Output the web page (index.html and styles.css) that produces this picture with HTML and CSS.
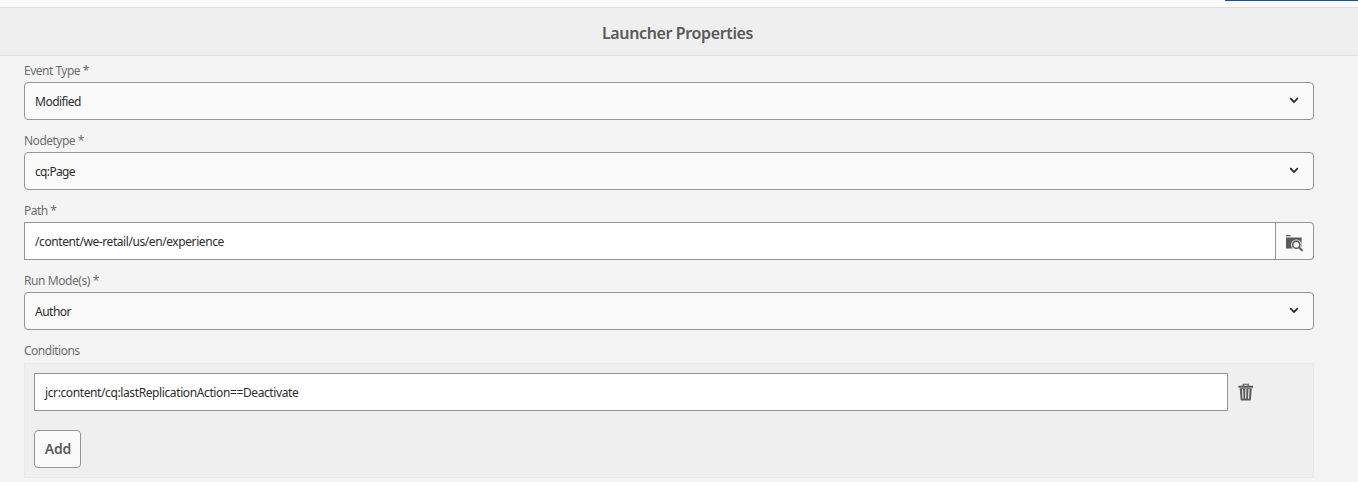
FILE: index.html
```html
<!DOCTYPE html>
<html lang="en">

<head>
  <meta charset="UTF-8">
  <meta name="viewport" content="width=device-width, initial-scale=1.0">
  <title>Launcher Properties</title>
  <link rel="stylesheet" href="styles.css">
</head>

<body>
  <div class="top-bar">
    <div class="top-action"></div>
  </div>

  <header class="header">
    <h1>Launcher Properties</h1>
  </header>

  <form class="launcher-form">
    <div class="field">
      <label class="label">Event Type *</label>
      <div class="select">
        <span>Modified</span>
        <svg class="chevron" viewBox="0 0 10 7"><path d="M1.2 1.2 5 5l3.8-3.8" /></svg>
      </div>
    </div>

    <div class="field">
      <label class="label">Nodetype *</label>
      <div class="select">
        <span class="nodetype">cq:Page</span>
        <svg class="chevron" viewBox="0 0 10 7"><path d="M1.2 1.2 5 5l3.8-3.8" /></svg>
      </div>
    </div>

    <div class="field">
      <label class="label">Path *</label>
      <div class="path-group">
        <div class="text-input path-input"><span>/content/we-retail/us/en/experience</span></div>
        <button type="button" class="browse" aria-label="Browse">
          <svg width="18" height="18" viewBox="0 0 18 18">
            <path fill="#5a5a5a" d="M1 1h4.2l1 1.2H1zM1 3.6h15.6v11H1z" />
            <circle cx="11.3" cy="10.7" r="5.2" fill="#fafafa" />
            <path stroke="#fafafa" stroke-width="4" d="m14 13.4 3.5 3.5" />
            <circle cx="11.3" cy="10.7" r="3.6" fill="#fafafa" stroke="#5a5a5a" stroke-width="1.6" />
            <path d="m14 13.4 2.9 2.9" stroke="#5a5a5a" stroke-width="2" stroke-linecap="round" />
          </svg>
        </button>
      </div>
    </div>

    <div class="field">
      <label class="label run-label">Run Mode(s) *</label>
      <div class="select">
        <span>Author</span>
        <svg class="chevron" viewBox="0 0 10 7"><path d="M1.2 1.2 5 5l3.8-3.8" /></svg>
      </div>
    </div>

    <div class="field">
      <label class="label">Conditions</label>
      <div class="conditions">
        <div class="condition-row">
          <div class="text-input"><span>jcr:content/cq:lastReplicationAction==Deactivate</span></div>
          <svg class="trash" width="16" height="18" viewBox="0 0 16 18">
            <path fill="none" stroke="#5a5a5a" stroke-width="1.1" d="M5.2 3V1.2h5.1V3" />
            <path fill="#5a5a5a" d="M.4 2.7h14.7v2H.4z" />
            <path fill="#5a5a5a" d="M1.7 5.2h12.1l-1 12.3H2.7z" />
            <path fill="none" stroke="#eee" stroke-width="1.1" d="m4.5 6 .5 9.6M7.75 6v9.6M11 6l-.5 9.6" />
          </svg>
        </div>
        <button type="button" class="add">Add</button>
      </div>
    </div>
  </form>
</body>

</html>
```
FILE: styles.css
```css
* {
  box-sizing: border-box;
}

body {
  margin: 0;
  height: 482px;
  overflow: hidden;
  background-color: #f4f4f4;
  color: #2c2c2c;
  font-family: "Noto Sans", sans-serif;
  font-size: 12px;
}

.top-bar {
  display: flex;
  justify-content: flex-end;
  height: 7px;
  background-color: #fafafa;
}

.top-action {
  width: 133px;
  height: 1px;
  background-color: #0d51b8;
}

.header {
  display: flex;
  align-items: center;
  justify-content: center;
  height: 49px;
  padding: 2px 3px 0 0;
  background-color: #efefef;
  border-top: 1px solid #dedede;
  border-bottom: 1px solid #dedede;
}

.header h1 {
  margin: 0;
  color: #5a5a5a;
  font-size: 16px;
  font-weight: 600;
  letter-spacing: -0.37px;
}

.launcher-form {
  padding: 0 44px 0 24px;
}

.field {
  margin-bottom: 6px;
}

.label {
  display: block;
  height: 26px;
  padding-top: 1px;
  color: #6e6e6e;
  line-height: 27px;
  letter-spacing: -0.5px;
}

.run-label {
  letter-spacing: -0.42px;
}

.select {
  display: flex;
  align-items: center;
  justify-content: space-between;
  height: 38px;
  padding: 0 14px 0 10px;
  background-color: #fafafa;
  border: 1px solid #959595;
  border-radius: 4px;
  letter-spacing: -0.5px;
}

.nodetype {
  letter-spacing: -0.65px;
}

.chevron {
  width: 10px;
  height: 7px;
  margin-bottom: 1px;
  fill: none;
  stroke: #222;
  stroke-width: 1.7;
}

.path-group {
  display: flex;
  height: 38px;
}

.text-input {
  display: flex;
  align-items: center;
  flex: 1;
  height: 38px;
  padding: 0 10px;
  background-color: #fff;
  border: 1px solid #959595;
  letter-spacing: -0.39px;
}

.path-input {
  padding-top: 1px;
  letter-spacing: -0.42px;
}

.browse {
  display: flex;
  align-items: center;
  justify-content: center;
  width: 38px;
  padding: 3px 1px 0 0;
  background-color: #fafafa;
  border: 1px solid #959595;
  border-left: none;
  border-radius: 0 4px 4px 0;
}

.conditions {
  height: 115px;
  padding: 9px;
  background-color: #efefef;
  border: 1px solid #eaeaea;
}

.label + .conditions {
  margin-top: 1px;
}

.condition-row {
  display: flex;
  align-items: center;
  gap: 10px;
  padding-right: 50px;
}

.add {
  width: 47px;
  height: 38px;
  margin-top: 19px;
  padding: 0 0 2px 1px;
  background-color: #fafafa;
  border: 1px solid #959595;
  border-radius: 4px;
  color: #5a5a5a;
  font-family: inherit;
  font-size: 14px;
  font-weight: 600;
  letter-spacing: -0.2px;
}
```
